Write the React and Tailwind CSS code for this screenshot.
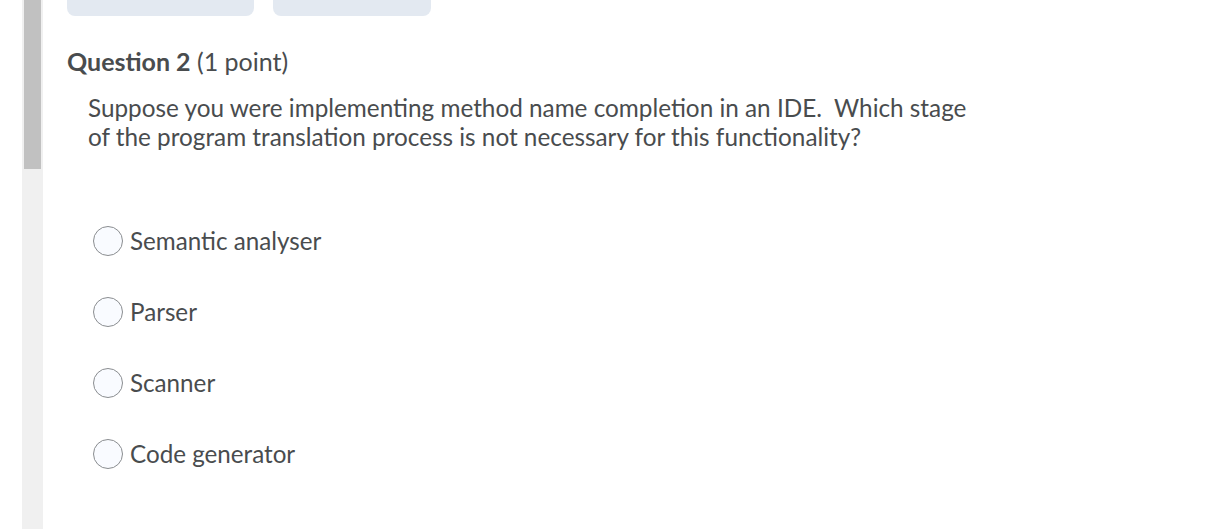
const options = ['Semantic analyser', 'Parser', 'Scanner', 'Code generator'];

const Radio = ({ label }) => (
  <label className="flex items-center h-[71px]">
    <span className="w-[30px] h-[30px] rounded-full border border-[#8a8d90] bg-[#f9fbff] shrink-0" />
    <span className="ml-[7px] text-[24.2px] leading-[30px] text-[#494c4e]">{label}</span>
  </label>
);

export default function App() {
  return (
    <div className="flex w-[1227px] h-[529px] bg-white overflow-hidden" style={{ fontFamily: 'Lato, "Noto Sans", sans-serif' }}>
      <div className="ml-[22px] w-[21px] h-full bg-[#f0f0f0] pl-[2px] pr-[2px] shrink-0">
        <div className="h-[169px] bg-[#c1c1c1]" />
      </div>
      <div className="flex-1 pl-[24px]">
        <div className="flex gap-[19px]">
          <div className="w-[187px] h-[16px] rounded-b-[8px] bg-[#e3e9f1]" />
          <div className="w-[158px] h-[16px] rounded-b-[8px] bg-[#e3e9f1]" />
        </div>
        <h2 className="mt-[30px] text-[25px] leading-[30px] text-[#494c4e]">
          <span className="font-bold">Question 2</span> (1 point)
        </h2>
        <p className="mt-[17px] ml-[21px] text-[24.3px] leading-[29px] text-[#494c4e]">
          Suppose you were implementing method name completion in an IDE.&nbsp; Which stage
          <br />
          of the program translation process is not necessary for this functionality?
        </p>
        <div className="mt-[54px] ml-[26px]">
          {options.map((o) => (
            <Radio key={o} label={o} />
          ))}
        </div>
      </div>
    </div>
  );
}
